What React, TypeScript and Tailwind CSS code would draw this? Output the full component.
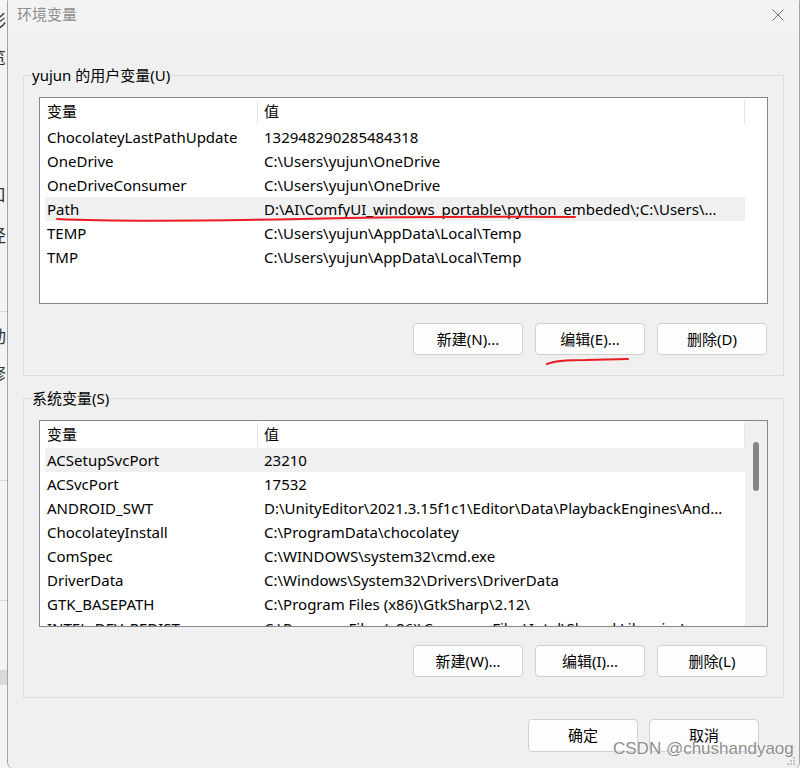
import React from "react";

const USER_ROWS: [string, string][] = [
  ["ChocolateyLastPathUpdate", "132948290285484318"],
  ["OneDrive", "C:\\Users\\yujun\\OneDrive"],
  ["OneDriveConsumer", "C:\\Users\\yujun\\OneDrive"],
  ["Path", "D:\\AI\\ComfyUI_windows_portable\\python_embeded\\;C:\\Users\\..."],
  ["TEMP", "C:\\Users\\yujun\\AppData\\Local\\Temp"],
  ["TMP", "C:\\Users\\yujun\\AppData\\Local\\Temp"],
];

const SYSTEM_ROWS: [string, string][] = [
  ["ACSetupSvcPort", "23210"],
  ["ACSvcPort", "17532"],
  ["ANDROID_SWT", "D:\\UnityEditor\\2021.3.15f1c1\\Editor\\Data\\PlaybackEngines\\And..."],
  ["ChocolateyInstall", "C:\\ProgramData\\chocolatey"],
  ["ComSpec", "C:\\WINDOWS\\system32\\cmd.exe"],
  ["DriverData", "C:\\Windows\\System32\\Drivers\\DriverData"],
  ["GTK_BASEPATH", "C:\\Program Files (x86)\\GtkSharp\\2.12\\"],
  ["INTEL_DEV_REDIST", "C:\\Program Files (x86)\\Common Files\\Intel\\Shared Libraries\\"],
];

function WinButton({ label, tall }: { label: string; tall?: boolean }) {
  return (
    <button
      className={`w-[110px] ${tall ? "h-[33px]" : "h-[32px]"} rounded-[4px] border border-[#d0d0d0] bg-[#fdfdfd] text-[15px] text-black flex items-center justify-center`}
    >
      {label}
    </button>
  );
}

function VarList({ rows, selected, scroll }: { rows: [string, string][]; selected: number; scroll?: boolean }) {
  return (
    <div className="h-[207px] border border-[#828790] bg-white overflow-hidden flex">
      <div className="w-[705px] pl-[5px] flex flex-col">
        {/* column header */}
        <div className="h-[27px] shrink-0 flex text-[15px] text-black">
          <div className="w-[212px] pl-[2px] flex items-center">变量</div>
          <div className="w-px h-[24px] mt-[2px] bg-[#e5e5e5]" />
          <div className="flex-1 pl-[6px] flex items-center">值</div>
          <div className="w-px h-[24px] mt-[2px] bg-[#e5e5e5]" />
        </div>
        {rows.map(([name, value], i) => (
          <div
            key={name}
            className={`h-[24px] shrink-0 flex items-center text-[15px] text-black ${i === selected ? "bg-[#f0f0f0]" : ""}`}
          >
            <div className="w-[212px] pl-[2px] truncate">{name}</div>
            <div className="flex-1 min-w-0 pl-[7px] pr-[8px] whitespace-nowrap overflow-hidden text-ellipsis">{value}</div>
          </div>
        ))}
      </div>
      {scroll ? (
        <div className="flex-1 bg-[#f0f0f0] flex justify-center">
          <div className="w-[6px] h-[49px] mt-[21px] rounded-[3px] bg-[#858585]" />
        </div>
      ) : (
        <div className="flex-1" />
      )}
    </div>
  );
}

function GroupBox({ title, children }: { title: string; children: React.ReactNode }) {
  return (
    <fieldset className="border border-[#dcdcdc] px-[15px] pt-[12px] pb-[20px] m-0 min-w-0">
      <legend className="-ml-[8px] px-[1px] text-[15px] leading-[20px] text-black">{title}</legend>
      {children}
    </fieldset>
  );
}

function BackWindowStrip() {
  return (
    <div className="w-[7px] shrink-0 h-full bg-[#f4f4f4] overflow-hidden flex flex-col text-[17px] leading-[20px] text-[#333]">
      <div className="ml-[-11px] mt-[11px]">彩</div>
      <div className="ml-[-11px] mt-[17px]">览</div>
      <div className="ml-[-11px] mt-[117px]">口</div>
      <div className="ml-[-11px] mt-[21px]">径</div>
      <div className="h-px bg-[#d6d6d6] mt-[65px]" />
      <div className="ml-[-11px] mt-[15px]">动</div>
      <div className="ml-[-11px] mt-[17px]">修</div>
      <div className="h-px bg-[#d6d6d6] mt-[96px]" />
      <div className="h-px bg-[#d6d6d6] mt-[119px]" />
      <div className="h-[15px] bg-[#d9d9d9] mt-[69px]" />
    </div>
  );
}

export default function App() {
  return (
    <div className="relative w-[808px] h-[768px] overflow-hidden bg-white flex font-['Noto_Sans','Noto_Sans_CJK_SC',sans-serif]">
      <BackWindowStrip />

      {/* dialog window */}
      <div className="w-[793px] shrink-0 h-[775px] -mt-[5px] flex flex-col bg-[#f0f0f0] border-x border-[#a3a3a3] rounded-[8px] overflow-hidden">
        <div className="h-[38px] shrink-0 bg-[#f3f3f3] flex items-center justify-between pl-[9px] pr-[15px] pt-[1px]">
          <span className="text-[15px] text-[#8d8d8d]">环境变量</span>
          <svg width="12" height="12" viewBox="0 0 12 12" className="mt-[1px]">
            <path d="M0.5 0.5 L11.5 11.5 M11.5 0.5 L0.5 11.5" stroke="#707070" strokeWidth="1" fill="none" />
          </svg>
        </div>

        <div className="flex flex-col px-[15px] pt-[32px]">
          <GroupBox title="yujun 的用户变量(U)">
            <VarList rows={USER_ROWS} selected={3} />
            <div className="flex justify-end gap-[12px] mt-[19px] pr-[1px]">
              <WinButton label="新建(N)..." />
              <WinButton label="编辑(E)..." />
              <WinButton label="删除(D)" />
            </div>
          </GroupBox>

          <div className="h-[12px]" />

          <GroupBox title="系统变量(S)">
            <VarList rows={SYSTEM_ROWS} selected={0} scroll />
            <div className="flex justify-end gap-[12px] mt-[18px] pr-[1px]">
              <WinButton label="新建(W)..." />
              <WinButton label="编辑(I)..." />
              <WinButton label="删除(L)" />
            </div>
          </GroupBox>

          <div className="flex justify-end gap-[11px] mt-[21px] pr-[25px]">
            <WinButton label="确定" tall />
            <WinButton label="取消" tall />
          </div>
        </div>
      </div>

      <div className="flex-1 bg-white" />

      {/* red pen annotations drawn over the screenshot */}
      <svg className="absolute inset-0 pointer-events-none" width="808" height="768" viewBox="0 0 808 768">
        <path
          d="M57 219 C 120 222, 200 221, 300 219 C 380 217, 460 216, 575 217"
          stroke="#ea1c24"
          strokeWidth="2"
          fill="none"
          strokeLinecap="round"
        />
        <path d="M547 364 Q 556 360 585 360 L 628 359" stroke="#ea1c24" strokeWidth="2" fill="none" strokeLinecap="round" />
        <g fill="#c4c4c4">
          <rect x="793" y="757" width="2" height="2" />
          <rect x="790" y="760" width="2" height="2" />
          <rect x="793" y="760" width="2" height="2" />
          <rect x="787" y="763" width="2" height="2" />
          <rect x="790" y="763" width="2" height="2" />
          <rect x="793" y="763" width="2" height="2" />
        </g>
      </svg>

      <div className="absolute left-[613px] top-[738px] text-[17px] leading-[22px] text-[#8e8e8e] [text-shadow:0_0_2px_#ffffff,0_0_1px_#ffffff] font-['Liberation_Sans',sans-serif] whitespace-nowrap pointer-events-none">
        CSDN @chushandyaog
      </div>
    </div>
  );
}
